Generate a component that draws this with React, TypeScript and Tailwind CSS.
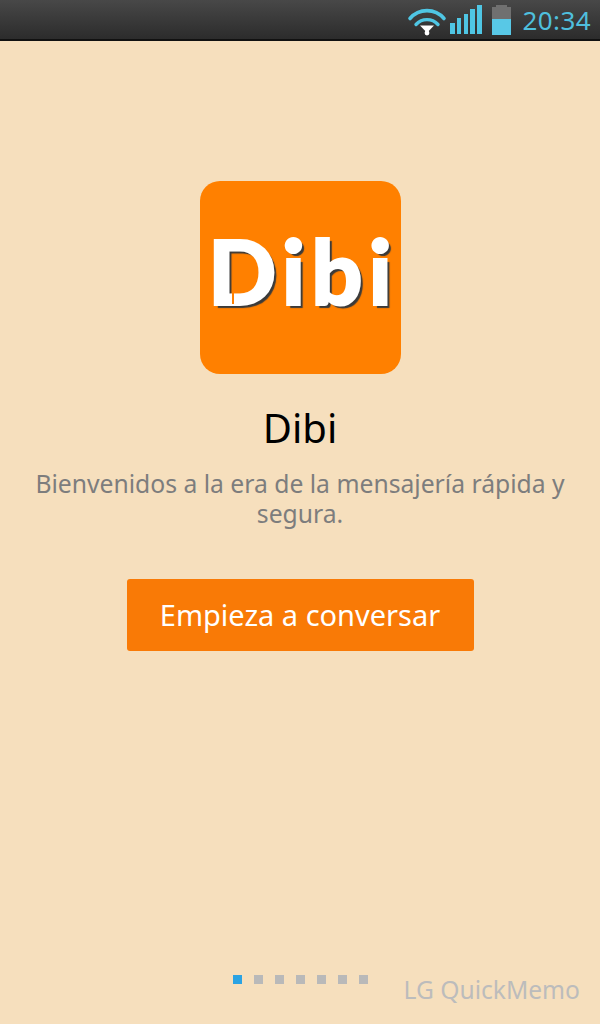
import React from 'react';

const StatusBar: React.FC = () => (
  <div className="flex h-[41px] shrink-0 items-center justify-end border-b-2 border-[#111] bg-gradient-to-b from-[#484848] to-[#2c2c2c] pr-[9px]">
    {/* wifi */}
    <svg width="40" height="30" viewBox="0 0 40 30" className="mr-[3px] mt-[2px]">
      <path d="M3 12.5 C12 2 28 2 37 12.5" fill="none" stroke="#4fc6e4" strokeWidth="3.6" strokeLinecap="round" />
      <path d="M9 18.5 C15 12 25 12 31 18.5" fill="none" stroke="#4fc6e4" strokeWidth="3.4" strokeLinecap="round" />
      <path d="M13 19.5 H27 L20.8 26 H19.2 Z" fill="#fff" />
      <circle cx="20" cy="27" r="2.4" fill="#fff" />
    </svg>
    {/* signal */}
    <div className="mr-[10px] mt-[-1px] flex h-[29px] items-end gap-[2.2px]">
      <div className="h-[11px] w-[4.5px] bg-[#4fc6e4]" />
      <div className="h-[16px] w-[4.5px] bg-[#4fc6e4]" />
      <div className="h-[20px] w-[4.5px] bg-[#4fc6e4]" />
      <div className="h-[25px] w-[4.5px] bg-[#4fc6e4]" />
      <div className="h-[29px] w-[4.5px] bg-[#4fc6e4]" />
    </div>
    {/* battery */}
    <div className="mr-[12px] mt-[1px] flex flex-col items-center">
      <div className="h-[2px] w-[11px] bg-[#707070]" />
      <div className="h-[12px] w-[19px] bg-[#707070]" />
      <div className="h-[16px] w-[19px] bg-[#58c8e6]" />
    </div>
    <span className="font-['Noto_Sans',sans-serif] text-[26px] leading-none tracking-[0.4px] text-[#4fbfdd]">20:34</span>
  </div>
);

const Logo: React.FC = () => (
  <div className="flex h-[193px] w-[201px] items-center justify-center rounded-[20px] bg-[#ff8000]">
    <span className="relative mt-[-16px] pl-[6px] font-['Lato',sans-serif] text-[90px] font-black leading-none tracking-[6px] text-white [-webkit-text-stroke:2px_white] [text-shadow:3px_3px_1px_#3a3a3a]">
      Dibi
      {/* slit cut into the D of the logo */}
      <span className="absolute bottom-[11px] left-[30px] h-[24px] w-[2px] bg-[#ff8000]" />
    </span>
  </div>
);

const App: React.FC = () => {
  const dots = [0, 1, 2, 3, 4, 5, 6];

  return (
    <div className="relative flex h-[1024px] w-[600px] flex-col overflow-hidden bg-[#f6dfbd] font-['Noto_Sans',sans-serif]">
      <StatusBar />
      <div className="flex flex-1 flex-col items-center pt-[140px]">
        <Logo />
        <h1 className="mt-[29px] text-[40px] font-normal leading-[50px] text-black">Dibi</h1>
        <p className="mt-[16px] w-[560px] text-center text-[24.7px] leading-[30px] text-[#7d7d7d]">
          Bienvenidos a la era de la mensajería rápida y segura.
        </p>
        <button className="mt-[50px] h-[72px] w-[347px] rounded-[3px] bg-[#f97a06] text-[29px] text-white">
          Empieza a conversar
        </button>
        <div className="mt-auto mb-[40px] flex gap-[12px]">
          {dots.map((d) => (
            <div key={d} className={d === 0 ? 'h-[9px] w-[9px] bg-[#2ba3e3]' : 'h-[9px] w-[9px] bg-[#b9b9b9]'} />
          ))}
        </div>
      </div>
      <span className="absolute bottom-[18px] right-[20px] text-[24.6px] leading-[32px] text-[#bcbcbc]">LG QuickMemo</span>
    </div>
  );
};

export default App;
